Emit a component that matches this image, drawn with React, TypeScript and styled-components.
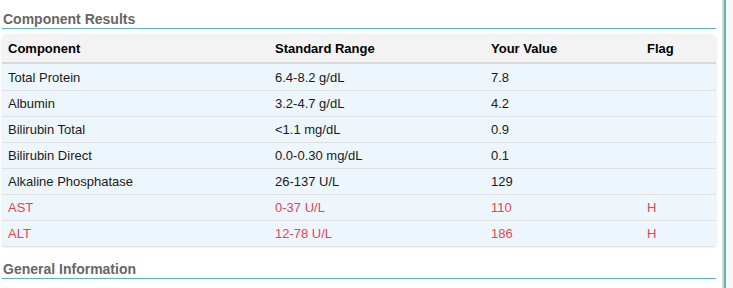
import React from "react";
import styled, { createGlobalStyle } from "styled-components";

type Result = {
  name: string;
  range: string;
  value: string;
  flag?: string;
};

const results: Result[] = [
  { name: "Total Protein", range: "6.4-8.2 g/dL", value: "7.8" },
  { name: "Albumin", range: "3.2-4.7 g/dL", value: "4.2" },
  { name: "Bilirubin Total", range: "<1.1 mg/dL", value: "0.9" },
  { name: "Bilirubin Direct", range: "0.0-0.30 mg/dL", value: "0.1" },
  { name: "Alkaline Phosphatase", range: "26-137 U/L", value: "129" },
  { name: "AST", range: "0-37 U/L", value: "110", flag: "H" },
  { name: "ALT", range: "12-78 U/L", value: "186", flag: "H" },
];

const App = () => (
  <Page>
    <GlobalStyle />
    <Main>
      <Title>Component Results</Title>
      <ResultsTable>
        <colgroup>
          <col width={267} />
          <col width={216} />
          <col width={156} />
          <col />
        </colgroup>
        <thead>
          <tr>
            <HeadCell>Component</HeadCell>
            <HeadCell>Standard Range</HeadCell>
            <HeadCell>Your Value</HeadCell>
            <HeadCell>Flag</HeadCell>
          </tr>
        </thead>
        <tbody>
          {results.map((r, i) => (
            <Row key={r.name} $high={!!r.flag} $first={i === 0}>
              <td>{r.name}</td>
              <td>{r.range}</td>
              <td>{r.value}</td>
              <td>{r.flag}</td>
            </Row>
          ))}
        </tbody>
      </ResultsTable>
      <Title $spaced>General Information</Title>
    </Main>
    <Aside />
  </Page>
);

export default App;

const GlobalStyle = createGlobalStyle`
  body {
    margin: 0;
    background: #fff;
    font-family: "Liberation Sans", Arial, sans-serif;
  }
`;

const Page = styled.div`
  display: flex;
  height: 288px;
  overflow: hidden;
`;

const Main = styled.div`
  width: 714px;
  padding: 0 6px 0 2px;
  border-right: 2px solid #d6d6d6;
`;

const Aside = styled.div`
  flex: 1;
  border-left: 2px solid #5cb9b2;
  background: #f7f7f7;
`;

const Title = styled.h2<{ $spaced?: boolean }>`
  margin: ${({ $spaced }) => ($spaced ? "4px 0 0" : "0 0 5px")};
  padding: 11px 0 1px 1px;
  font-size: 14px;
  line-height: 16px;
  font-weight: bold;
  color: #666;
  border-bottom: 1px solid #5cb9b2;
`;

const ResultsTable = styled.table`
  width: 100%;
  table-layout: fixed;
  border-collapse: separate;
  border-spacing: 0;
  border-radius: 5px 5px 3px 3px;
  overflow: hidden;
  box-shadow: 0 1px 2px rgba(0, 0, 0, 0.18);
  font-size: 13px;
`;

const HeadCell = styled.th`
  height: 28px;
  padding: 0 0 0 6px;
  text-align: left;
  font-weight: bold;
  color: #000;
  background: #f3f3f3;
  border-bottom: 2px solid #d8d8d8;
`;

const Row = styled.tr<{ $high: boolean; $first: boolean }>`
  td {
    height: ${({ $first }) => ($first ? "26px" : "25px")};
    padding: 0 0 0 6px;
    background: #eef6fd;
    color: ${({ $high }) => ($high ? "#f0414f" : "#1a1a1a")};
    border-top: ${({ $first }) => ($first ? "none" : "1px solid #e1e1e1")};
  }
`;
